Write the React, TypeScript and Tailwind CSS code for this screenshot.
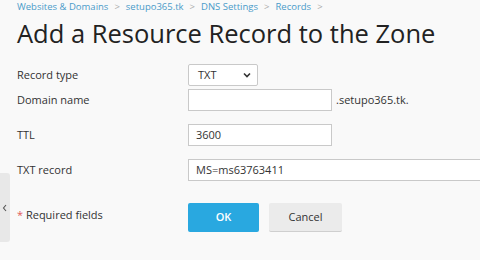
import React from 'react'

const crumbs = ['Websites & Domains', 'setupo365.tk', 'DNS Settings', 'Records']

function Row({ label, className, children }: { label: string; className?: string; children: React.ReactNode }) {
  return (
    <div className={`flex items-center ${className ?? ''}`}>
      <div className="w-[171px] shrink-0 text-[11px] text-[#333]">{label}</div>
      {children}
    </div>
  )
}

export default function App() {
  return (
    <div
      className="relative h-[260px] w-[480px] overflow-hidden bg-[#f9f9f9]"
      style={{ fontFamily: '"Open Sans", sans-serif' }}
    >
      {/* collapsed side panel tab */}
      <div className="absolute left-0 top-[173px] flex h-[69px] w-[10px] items-center justify-center rounded-r-[3px] bg-[#e8e8e8]">
        <svg width="6" height="8" viewBox="0 0 6 8" className="ml-[-1px]">
          <path d="M4 1 L1.5 4 L4 7" fill="none" stroke="#555" strokeWidth="1.1" />
        </svg>
      </div>

      <div className="pl-[17px]">
        <div className="flex items-center pt-[0px] text-[9.5px] leading-[13px] text-[#4a9bc9]">
          {crumbs.map((c) => (
            <React.Fragment key={c}>
              <span>{c}</span>
              <span className="mx-[6px] text-[#aaa]">&gt;</span>
            </React.Fragment>
          ))}
        </div>

        <h1 className="mt-[3px] text-[25.5px] font-normal leading-[34px] text-[#222]">
          Add a Resource Record to the Zone
        </h1>

        <div className="mt-[14px]">
          <Row label="Record type">
            <div className="flex h-[22px] w-[70px] items-center justify-between rounded-[2px] border border-[#c9c9c9] bg-white pl-[9px] pr-[6px] text-[11px] text-[#333]">
              <span>TXT</span>
              <svg width="8" height="6" viewBox="0 0 8 6">
                <path d="M1 1.5 L4 4.5 L7 1.5" fill="none" stroke="#333" strokeWidth="1.6" />
              </svg>
            </div>
          </Row>
          <Row label="Domain name" className="mt-[3px]">
            <div className="h-[22px] w-[144px] border border-[#c9c9c9] bg-white" />
            <span className="ml-[4px] text-[11px] text-[#333]">.setupo365.tk.</span>
          </Row>
          <Row label="TTL" className="mt-[13px]">
            <div className="flex h-[22px] w-[144px] items-center border border-[#c9c9c9] bg-white pl-[7px] text-[11px] text-[#333]">
              3600
            </div>
          </Row>
          <Row label="TXT record" className="mt-[13px]">
            <div className="flex h-[22px] w-[300px] shrink-0 items-center border border-[#c9c9c9] bg-white pl-[7px] text-[11px] text-[#333]">
              MS=ms63763411
            </div>
          </Row>
          <div className="mt-[22px] flex items-start">
            <div className="w-[171px] shrink-0 pt-[4px] text-[11px] text-[#333]">
              <span className="text-[#e05a5a]">*</span> Required fields
            </div>
            <button className="h-[29px] w-[71px] rounded-[2px] bg-[#29a8e0] text-[11px] font-semibold text-white">
              OK
            </button>
            <button className="ml-[10px] h-[29px] w-[73px] rounded-[2px] border-b border-[#cfcfcf] bg-[#ebebeb] text-[11px] text-[#333]">
              Cancel
            </button>
          </div>
        </div>
      </div>
    </div>
  )
}
